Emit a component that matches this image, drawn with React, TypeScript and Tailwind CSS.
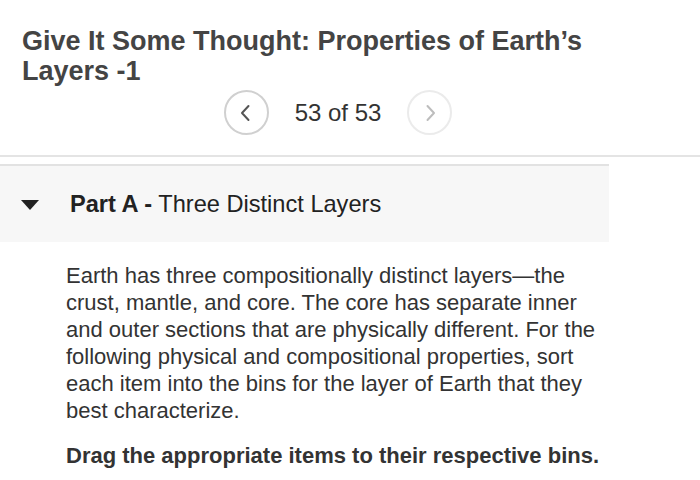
const ChevronLeft = ({ className }: { className?: string }) => (
  <svg viewBox="0 0 24 24" className={className} fill="none" stroke="currentColor" strokeWidth={2} strokeLinecap="round" strokeLinejoin="round">
    <path d="M14.5 5 L8 12 L14.5 19" />
  </svg>
);

const ChevronRight = ({ className }: { className?: string }) => (
  <svg viewBox="0 0 24 24" className={className} fill="none" stroke="currentColor" strokeWidth={2} strokeLinecap="round" strokeLinejoin="round">
    <path d="M9.5 5 L16 12 L9.5 19" />
  </svg>
);

const App = () => {
  return (
    <div className="w-[700px] h-[480px] bg-white overflow-hidden font-['Liberation_Sans',Arial,sans-serif]">
      <div className="pl-[22px] pt-[26px]">
        <h1 className="text-[27px] leading-[30px] font-bold text-[#444]">
          Give It Some Thought: Properties of Earth’s
          <br />
          Layers -1
        </h1>
      </div>

      <div className="flex items-center justify-center gap-[26px] pr-[24px] mt-[4px]">
        <button className="w-[45px] h-[45px] rounded-full border-2 border-[#d0d0d0] flex items-center justify-center text-[#555]">
          <ChevronLeft className="w-[24px] h-[24px]" />
        </button>
        <span className="text-[24px] text-[#333]">53 of 53</span>
        <button className="w-[45px] h-[45px] rounded-full border-2 border-[#ebebeb] flex items-center justify-center text-[#bdbdbd]">
          <ChevronRight className="w-[24px] h-[24px]" />
        </button>
      </div>

      <div className="mt-[20px] h-[2px] bg-[#e4e4e4]" />

      <div className="mt-[7px] w-[609px] h-[78px] bg-[#f7f7f7] border-t-2 border-[#e2e2e2] flex items-center">
        <span className="ml-[21px] mt-[2px] w-0 h-0 border-l-[9px] border-r-[9px] border-t-[10px] border-l-transparent border-r-transparent border-t-[#222]" />
        <div className="ml-[31px] mt-[2px] text-[23.6px] text-[#222]">
          <span className="font-bold">Part A -</span> Three Distinct Layers
        </div>
      </div>

      <div className="pl-[66px] pt-[20px] text-[22px] leading-[27px] text-[#333]">
        <p>
          Earth has three compositionally distinct layers—the
          <br />
          crust, mantle, and core. The core has separate inner
          <br />
          and outer sections that are physically different. For the
          <br />
          following physical and compositional properties, sort
          <br />
          each item into the bins for the layer of Earth that they
          <br />
          best characterize.
        </p>
        <p className="mt-[18px] font-bold">Drag the appropriate items to their respective bins.</p>
      </div>
    </div>
  );
};

export default App;
